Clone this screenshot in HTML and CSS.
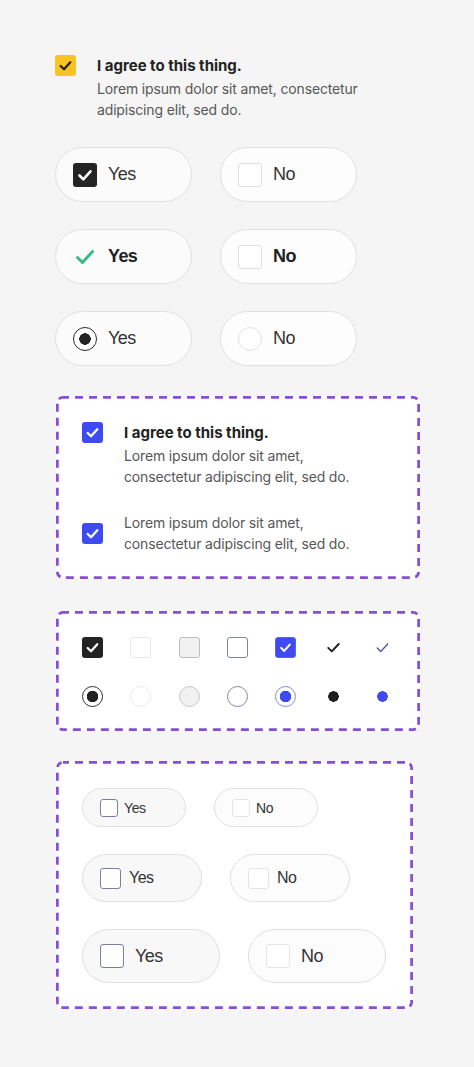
FILE: index.html
```html
<!DOCTYPE html>
<html lang="en">
    <head>
        <title>Checkbox &amp; Radio</title>
        <meta charset="utf-8">
        <meta name="viewport" content="width=device-width, initial-scale=1">
        <link rel="stylesheet" href="styles.css">
    </head>
    <body>
        <main class="page">

            <!-- consent row -->
            <label class="agree">
                <span class="box box-yellow">
                    <svg viewBox="0 0 24 24"><path d="M6.5 12.5l3.8 3.8 7.2-8"/></svg>
                </span>
                <span class="agree-text">
                    <strong>I agree to this thing.</strong>
                    <span class="desc">Lorem ipsum dolor sit amet, consectetur<br>adipiscing elit, sed do.</span>
                </span>
            </label>

            <!-- yes / no pills -->
            <div class="pill-rows">
                <div class="pill-row">
                    <div class="pill">
                        <span class="box box-dark"><svg viewBox="0 0 24 24"><path d="M6.5 12.5l3.8 3.8 7.2-8"/></svg></span>
                        Yes
                    </div>
                    <div class="pill">
                        <span class="box box-empty"></span>
                        No
                    </div>
                </div>
                <div class="pill-row bold">
                    <div class="pill">
                        <span class="tick-green"><svg viewBox="0 0 24 24"><path d="M4.5 12.5l5 5 10-11"/></svg></span>
                        Yes
                    </div>
                    <div class="pill">
                        <span class="box box-empty"></span>
                        No
                    </div>
                </div>
                <div class="pill-row">
                    <div class="pill">
                        <span class="radio radio-on"></span>
                        Yes
                    </div>
                    <div class="pill">
                        <span class="radio radio-off"></span>
                        No
                    </div>
                </div>
            </div>

            <!-- consent list -->
            <div class="frame frame-list">
                <label class="item">
                    <span class="box box-blue"><svg viewBox="0 0 24 24"><path d="M6.5 12.5l3.8 3.8 7.2-8"/></svg></span>
                    <span class="agree-text">
                        <strong>I agree to this thing.</strong>
                        <span class="desc">Lorem ipsum dolor sit amet,<br>consectetur adipiscing elit, sed do.</span>
                    </span>
                </label>
                <label class="item centered">
                    <span class="box box-blue"><svg viewBox="0 0 24 24"><path d="M6.5 12.5l3.8 3.8 7.2-8"/></svg></span>
                    <span class="agree-text">
                        <span class="desc">Lorem ipsum dolor sit amet,<br>consectetur adipiscing elit, sed do.</span>
                    </span>
                </label>
            </div>

            <!-- states -->
            <div class="frame frame-states">
                <div class="states">
                    <span class="sq sq-dark"><svg viewBox="0 0 24 24"><path d="M6.5 12.5l3.8 3.8 7.2-8"/></svg></span>
                    <span class="sq sq-light"></span>
                    <span class="sq sq-grey"></span>
                    <span class="sq sq-line"></span>
                    <span class="sq sq-blue"><svg viewBox="0 0 24 24"><path d="M6.5 12.5l3.8 3.8 7.2-8"/></svg></span>
                    <span class="sq sq-bare"><svg viewBox="0 0 24 24"><path d="M6 12.5l4 4 8-8.5"/></svg></span>
                    <span class="sq sq-bare sq-bare-blue"><svg viewBox="0 0 24 24"><path d="M6 12.5l4 4 8-8.5"/></svg></span>

                    <span class="rd rd-dark"></span>
                    <span class="rd rd-light"></span>
                    <span class="rd rd-grey"></span>
                    <span class="rd rd-line"></span>
                    <span class="rd rd-blue"></span>
                    <span class="rd rd-dot"></span>
                    <span class="rd rd-dot rd-dot-blue"></span>
                </div>
            </div>

            <!-- sizes -->
            <div class="frame frame-sizes">
                <div class="pill-row size-s">
                    <div class="pill"><span class="box box-line"></span>Yes</div>
                    <div class="pill"><span class="box box-empty"></span>No</div>
                </div>
                <div class="pill-row size-m">
                    <div class="pill"><span class="box box-line"></span>Yes</div>
                    <div class="pill"><span class="box box-empty"></span>No</div>
                </div>
                <div class="pill-row size-l">
                    <div class="pill"><span class="box box-line"></span>Yes</div>
                    <div class="pill"><span class="box box-empty"></span>No</div>
                </div>
            </div>

        </main>
    </body>
</html>
```

FILE: styles.css
```css
html, body {
  margin: 0;
  background: #f5f5f5;
}

.page {
  padding: 55px 0 40px 55px;
  font-family: Inter, "Open Sans", sans-serif;
  color: #222;
  display: flex;
  flex-direction: column;
  align-items: flex-start;
}

/* ---------- checkbox glyphs ---------- */

.box {
  flex: none;
  box-sizing: border-box;
  width: 24px;
  height: 24px;
  border-radius: 3px;
  display: flex;
  align-items: center;
  justify-content: center;
}

.box svg, .sq svg {
  width: 100%;
  height: 100%;
  fill: none;
  stroke: #fff;
  stroke-width: 2.6;
  stroke-linecap: round;
  stroke-linejoin: round;
}

.box-yellow {
  width: 21px;
  height: 21px;
  background: #f8c421;
}
.box-yellow svg {
  stroke: #2a2210;
}

.box-dark {
  background: #242424;
}

.box-blue {
  width: 21px;
  height: 21px;
  background: #3f4bf2;
}

.box-empty {
  background: #fff;
  border: 1px solid #dedede;
}

.box-line {
  background: #fff;
  border: 1.5px solid #7c7f9e;
}

.tick-green {
  width: 24px;
  height: 24px;
  flex: none;
}
.tick-green svg {
  width: 100%;
  height: 100%;
  fill: none;
  stroke: #3bb98a;
  stroke-width: 3;
  stroke-linecap: round;
  stroke-linejoin: round;
}

.radio {
  flex: none;
  box-sizing: border-box;
  width: 24px;
  height: 24px;
  border-radius: 50%;
  background: #fff;
}

.radio-on {
  border: 1.5px solid #2a2a2a;
  background: radial-gradient(circle, #222 0 5.5px, #fff 6px);
}

.radio-off {
  border: 1px solid #e2e2e2;
}

/* ---------- consent text ---------- */

.agree, .item {
  display: flex;
  align-items: flex-start;
  gap: 21px;
}

.agree-text {
  display: flex;
  flex-direction: column;
}

.agree-text strong {
  font-size: 15px;
  font-weight: 700;
  line-height: 21px;
  margin-bottom: 2px;
}

.desc {
  font-size: 14px;
  line-height: 21px;
  color: #575757;
  letter-spacing: -0.15px;
}

/* ---------- pills ---------- */

.pill-rows {
  margin-top: 27px;
  display: flex;
  flex-direction: column;
  gap: 27px;
}

.pill-row {
  display: flex;
  gap: 28px;
}

.pill {
  box-sizing: border-box;
  width: 137px;
  height: 55px;
  padding-left: 17px;
  display: flex;
  align-items: center;
  gap: 11px;
  border: 1px solid #e0e0e0;
  border-radius: 28px;
  background: #fbfbfb;
  font-family: "Liberation Sans", Arial, sans-serif;
  font-size: 18px;
  letter-spacing: -0.6px;
  color: #333;
}

.pill-row .pill + .pill {
  background: #fdfdfd;
}

.bold .pill {
  font-weight: bold;
  color: #222;
}

/* ---------- dashed frames ---------- */

.frame {
  box-sizing: border-box;
  width: 364px;
  margin-left: 1px;
  background-color: #fff;
  background-image: url("data:image/svg+xml,%3csvg xmlns='http://www.w3.org/2000/svg' width='100%25' height='100%25'%3e%3crect width='100%25' height='100%25' fill='none' rx='7' ry='7' stroke='%23884FD4' stroke-width='5.5' stroke-dasharray='8%2c 6' stroke-dashoffset='2'/%3e%3c/svg%3e");
  border-radius: 7px;
}

.frame-list {
  margin-top: 30px;
  padding: 26px 20px 25px 26px;
  display: flex;
  flex-direction: column;
  gap: 25px;
}

.item.centered {
  align-items: center;
}

.frame-states {
  margin-top: 32px;
  padding: 26px 0 24px 26px;
}

.frame-sizes {
  width: 357px;
  margin-top: 30px;
  padding: 27px 0 26px 26px;
  display: flex;
  flex-direction: column;
  gap: 27px;
}

/* ---------- state grid ---------- */

.states {
  display: grid;
  grid-template-columns: repeat(7, 21px);
  grid-auto-rows: 21px;
  column-gap: 27.3px;
  row-gap: 28px;
}

.sq, .rd {
  box-sizing: border-box;
  width: 21px;
  height: 21px;
  display: flex;
  align-items: center;
  justify-content: center;
}

.sq {
  border-radius: 3px;
}

.sq-dark {
  background: #232323;
}

.sq-light {
  background: #fff;
  border: 1px solid #e8e8e8;
}

.sq-grey {
  background: #f1f1f1;
  border: 1.5px solid #bdbdbd;
}

.sq-line {
  background: #fff;
  border: 1.5px solid #7f82a8;
}

.sq-blue {
  background: #3f4bf2;
  border: 1px solid #5d66d8;
}

.sq-bare svg {
  stroke: #1f1f1f;
  stroke-width: 2.2;
}

.sq-bare-blue svg {
  stroke: #4c5aa6;
  stroke-width: 1.6;
}

.rd {
  border-radius: 50%;
}

.rd-dark {
  border: 1.5px solid #2f2f2f;
  background: radial-gradient(circle, #222 0 5.5px, #fff 6px);
}

.rd-light {
  background: #fff;
  border: 1px solid #ebebeb;
}

.rd-grey {
  background: #f1f1f1;
  border: 1.5px solid #c6c6c6;
}

.rd-line {
  background: #fff;
  border: 1.5px solid #8487ae;
}

.rd-blue {
  border: 1.5px solid #8489d6;
  background: radial-gradient(circle, #3f4bf2 0 5.5px, #fff 6px);
}

.rd-dot {
  background: radial-gradient(circle, #1f1f1f 0 5px, transparent 5.5px);
}

.rd-dot-blue {
  background: radial-gradient(circle, #3f4bf2 0 5px, transparent 5.5px);
}

/* ---------- pill sizes ---------- */

.size-s .pill {
  width: 104px;
  height: 39px;
  gap: 6px;
  font-size: 14px;
  letter-spacing: -0.4px;
  background: #f8f8f8;
}
.size-s .box {
  width: 18px;
  height: 18px;
}

.size-m .pill {
  width: 120px;
  height: 48px;
  gap: 8px;
  font-size: 16px;
  letter-spacing: -0.5px;
  background: #f8f8f8;
}
.size-m .box {
  width: 21px;
  height: 21px;
}

.size-l .pill {
  width: 138px;
  height: 54px;
  gap: 11px;
  font-size: 18px;
  background: #f8f8f8;
}
.size-l .box {
  width: 24px;
  height: 24px;
}

.frame-sizes .pill + .pill {
  background: #fcfcfc;
}
.frame-sizes .box-empty {
  border-color: #e4e4e4;
}
```
